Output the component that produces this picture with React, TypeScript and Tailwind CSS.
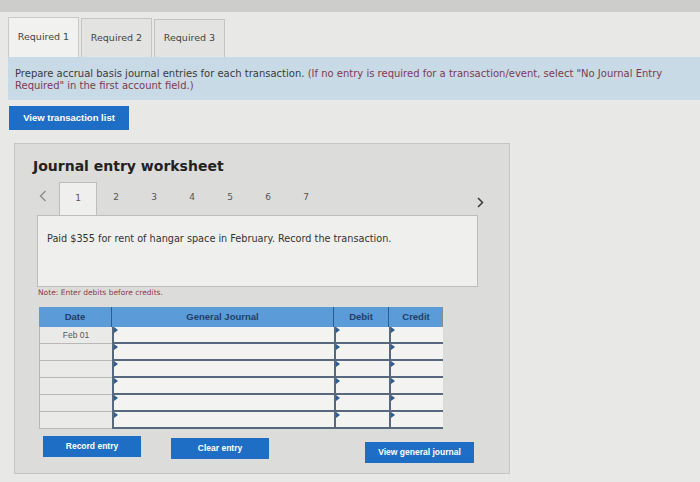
import React from "react";

const Marker = () => (
  <span className="absolute left-0 top-0 w-0 h-0 border-t-[3px] border-b-[3px] border-l-[4px] border-t-transparent border-b-transparent border-l-[#2f5d8f]" />
);

export default function App() {
  const rows = ["Feb 01", "", "", "", "", ""];
  const verdana = { fontFamily: '"DejaVu Sans", Verdana, sans-serif' };
  const arial = { fontFamily: '"Liberation Sans", Arial, sans-serif' };
  return (
    <div className="w-[700px] h-[482px] bg-[#e8e8e7] overflow-hidden" style={verdana}>
      <div className="h-[12px] bg-[#cdcdcc]" />
      <div className="flex ml-[8px] mt-[5px] h-[40px] items-end">
        <div className="w-[71px] h-[40px] bg-[#f1f1f0] border border-[#c9c9c9] border-b-0 flex items-center justify-center text-[9.5px] text-[#444]">
          Required 1
        </div>
        <div className="ml-[2px] w-[71px] h-[39px] bg-[#e3e3e2] border border-[#c4c4c4] border-b-0 flex items-center justify-center text-[9.5px] text-[#444]">
          Required 2
        </div>
        <div className="ml-[2px] w-[71px] h-[38px] bg-[#e3e3e2] border border-[#c4c4c4] border-b-0 flex items-center justify-center text-[9.5px] text-[#444]">
          Required 3
        </div>
      </div>
      <div className="ml-[8px] h-[43px] bg-[#c8dae6] px-[7px] pt-[11px] text-[10px] leading-[12px] text-[#3a3a3a] whitespace-nowrap">
        <div>
          Prepare accrual basis journal entries for each transaction.{" "}
          <span className="text-[#7e3b52]">(If no entry is required for a transaction/event, select "No Journal Entry</span>
        </div>
        <div className="text-[#7e3b52]">Required" in the first account field.)</div>
      </div>
      <div className="ml-[9px] mt-[6px] w-[120px] h-[24px] bg-[#1f6ec6] flex items-center justify-center text-white text-[9.5px] font-bold" style={arial}>
        View transaction list
      </div>
      <div className="ml-[14px] mt-[13px] w-[496px] h-[331px] bg-[#dcdcdb] border border-[#c6c6c6] flex flex-col">
        <div className="ml-[18px] mt-[13px] text-[14px] font-bold text-[#222] leading-[18px]">Journal entry worksheet</div>
        <div className="ml-[22px] mt-[7px] w-[441px] h-[33px] flex items-end relative">
          <svg className="absolute left-[2px] top-[8px]" width="8" height="12" viewBox="0 0 8 12">
            <path d="M6.5 1 L1.5 6 L6.5 11" fill="none" stroke="#8a8a8a" strokeWidth="1.3" />
          </svg>
          <svg className="absolute right-[-6px] top-[15px]" width="7" height="11" viewBox="0 0 7 11">
            <path d="M1 1 L5.5 5.5 L1 10" fill="none" stroke="#3a3a3a" strokeWidth="1.5" />
          </svg>
          <div className="ml-[22px] w-[38px] h-[33px] bg-[#efefee] border border-[#bdbdbd] border-b-0 flex justify-center pt-[9px] text-[9px] text-[#555]">1</div>
          {["2", "3", "4", "5", "6", "7"].map((n) => (
            <div key={n} className="w-[38px] h-[33px] flex justify-center pt-[9px] text-[9px] text-[#555]">{n}</div>
          ))}
        </div>
        <div className="ml-[22px] w-[441px] h-[72px] bg-[#efefee] border border-[#bdbdbd] px-[9px] pt-[16px] text-[9.7px] text-[#333]">
          Paid $355 for rent of hangar space in February. Record the transaction.
        </div>
        <div className="ml-[23px] mt-[1px] text-[7.5px] text-[#8a3a4e] leading-[10px]">Note: Enter debits before credits.</div>
        <div className="ml-[24px] mt-[9px] w-[404px] border-r border-[#8a8a8a]" style={arial}>
          <div className="grid grid-cols-[73px_222px_55px_54px] h-[20px] bg-[#5b9bd8] text-[9.5px] font-bold text-[#1e3f66]">
            <div className="flex items-center justify-center border-r border-[#2d5c92]">Date</div>
            <div className="flex items-center justify-center border-r border-[#2d5c92]">General Journal</div>
            <div className="flex items-center justify-center border-r border-[#2d5c92]">Debit</div>
            <div className="flex items-center justify-center">Credit</div>
          </div>
          {rows.map((d, i) => (
            <div key={i} className="grid grid-cols-[73px_222px_55px_54px] h-[17px]">
              <div className="bg-[#eaeae9] border-l border-b border-[#b8b8b8] text-[8.5px] text-[#555] flex items-center justify-center">{d}</div>
              <div className="relative bg-[#f3f3f2] border-l-2 border-b-2 border-[#56677e]"><Marker /></div>
              <div className="relative bg-[#f3f3f2] border-l-2 border-b-2 border-[#56677e]"><Marker /></div>
              <div className="relative bg-[#f3f3f2] border-l-2 border-b-2 border-[#56677e]"><Marker /></div>
            </div>
          ))}
        </div>
        <div className="ml-[28px] mt-[7px] flex items-start text-white text-[8.5px] font-bold" style={arial}>
          <div className="w-[98px] h-[21px] bg-[#1f6ec6] flex items-center justify-center">Record entry</div>
          <div className="ml-[30px] mt-[2px] w-[98px] h-[21px] bg-[#1f6ec6] flex items-center justify-center">Clear entry</div>
          <div className="ml-[96px] mt-[6px] w-[109px] h-[21px] bg-[#1f6ec6] flex items-center justify-center">View general journal</div>
        </div>
      </div>
    </div>
  );
}
